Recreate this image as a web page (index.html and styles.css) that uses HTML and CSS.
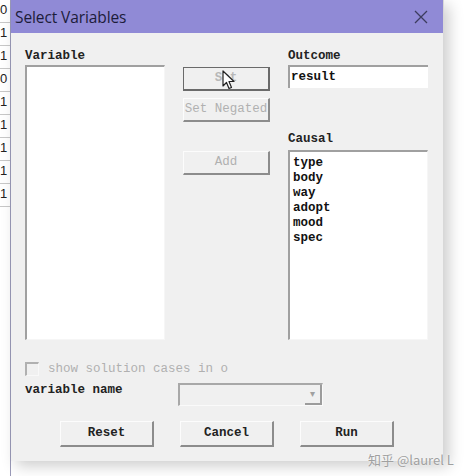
FILE: index.html
```html
<!DOCTYPE html>
<html>
<head>
  <meta charset="utf-8">
  <title>Select Variables</title>
  <link rel="stylesheet" href="styles.css">
</head>
<body>
  <div class="screen">
    <div class="sheet">
      <div class="cell">0</div>
      <div class="cell">1</div>
      <div class="cell">1</div>
      <div class="cell">0</div>
      <div class="cell">1</div>
      <div class="cell">1</div>
      <div class="cell">1</div>
      <div class="cell">1</div>
      <div class="cell">1</div>
    </div>

    <div class="dialog">
      <div class="titlebar">
        <span class="title">Select Variables</span>
        <svg class="close" width="14" height="14" viewBox="0 0 14 14">
          <path d="M1 1 L13 13 M13 1 L1 13" stroke="#3c3c5e" stroke-width="1.3" fill="none"/>
        </svg>
      </div>

      <div class="content">
        <div class="columns">
          <div class="col col-vars">
            <div class="label">Variable</div>
            <div class="listbox tall"></div>
          </div>

          <div class="col col-actions">
            <div class="btn default">Set</div>
            <div class="btn disabled">Set Negated</div>
            <div class="btn disabled add">Add</div>
          </div>

          <div class="col col-model">
            <div class="label">Outcome</div>
            <div class="textbox">result</div>
            <div class="label causal">Causal</div>
            <ul class="listbox causal-list">
              <li>type</li>
              <li>body</li>
              <li>way</li>
              <li>adopt</li>
              <li>mood</li>
              <li>spec</li>
            </ul>
          </div>
        </div>

        <div class="check-row">
          <span class="checkbox"></span>
          <span class="muted">show solution cases in o</span>
        </div>

        <div class="name-row">
          <span class="label bold">variable name</span>
          <div class="combo">
            <span class="combo-arrow">&#9662;</span>
          </div>
        </div>

        <div class="button-row">
          <div class="btn wide">Reset</div>
          <div class="btn wide">Cancel</div>
          <div class="btn wide">Run</div>
        </div>
      </div>

      <svg class="cursor" width="14" height="21" viewBox="0 0 14 21">
        <path d="M1 1 L1 16 L4.5 12.5 L7 18.5 L9.5 17.5 L7 11.5 L12 11.5 Z" fill="#fff" stroke="#222" stroke-width="1.2" stroke-linejoin="round"/>
      </svg>
    </div>

    <div class="watermark">知乎 @laurel L</div>
  </div>
</body>
</html>
```

FILE: styles.css
```css
body {
  margin: 0;
  background: #fff;
  font-family: "Liberation Mono", "DejaVu Sans Mono", monospace;
  font-size: 12.5px;
  color: #111;
}

.screen {
  position: relative;
  display: flex;
  height: 476px;
  overflow: hidden;
}

/* spreadsheet peeking out on the left */
.sheet {
  width: 10px;
  border-right: 1px solid #9a9ab8;
  overflow: hidden;
}

.sheet .cell {
  height: 22px;
  border-bottom: 1px solid #c8c8c8;
  font-family: "Liberation Sans", Arial, sans-serif;
  font-size: 13px;
  line-height: 19px;
  color: #222;
}

.dialog {
  position: relative;
  width: 432px;
  height: 461px;
  background: #f0f0f0;
  box-shadow: 5px 5px 14px rgba(0, 0, 0, 0.2);
  border-right: 1px solid #d8d8d8;
}

.titlebar {
  height: 33px;
  background: #908ad6;
  display: flex;
  align-items: center;
  justify-content: space-between;
  padding: 0 15px 0 4px;
}

.title {
  font-family: "Open Sans", "Noto Sans", sans-serif;
  font-size: 15.5px;
  color: #1c1c3a;
  letter-spacing: -0.1px;
}

.content {
  padding: 14px 14px 0 14px;
}

.columns {
  display: flex;
  gap: 18px;
}

.col {
  display: flex;
  flex-direction: column;
}

.col-vars,
.col-model {
  width: 140px;
}

.col-actions {
  width: 87px;
  padding-top: 20px;
}

.label {
  height: 18px;
  line-height: 18px;
  font-weight: bold;
  color: #222;
}

.label.causal {
  margin-top: 40px;
  height: 22px;
  line-height: 22px;
}

.listbox {
  margin: 0;
  padding: 0;
  list-style: none;
  background: #fff;
  border-top: 2px solid #a0a0a0;
  border-left: 2px solid #a0a0a0;
  border-right: 1px solid #f6f6f6;
  border-bottom: 1px solid #f6f6f6;
  box-sizing: border-box;
}

.listbox.tall {
  height: 275px;
}

.causal-list {
  height: 190px;
  padding: 4px 0 0 3px;
}

.causal-list li {
  height: 15px;
  line-height: 15px;
  font-weight: bold;
}

.textbox {
  height: 23px;
  box-sizing: border-box;
  background: #fff;
  border-top: 2px solid #a0a0a0;
  border-left: 2px solid #a0a0a0;
  padding-left: 1px;
  line-height: 20px;
  font-weight: bold;
}

.btn {
  height: 24px;
  box-sizing: border-box;
  background: #f0f0f0;
  border-top: 1px solid #fcfcfc;
  border-left: 1px solid #fcfcfc;
  border-right: 2px solid #8c8c8c;
  border-bottom: 2px solid #8c8c8c;
  text-align: center;
  line-height: 21px;
  font-weight: bold;
  color: #222;
  margin-bottom: 7px;
}

.btn.default {
  border: 1px solid #6a6a6a;
  border-right-width: 2px;
  border-bottom-width: 2px;
  color: #b8b8b8;
}

.btn.disabled {
  color: #b0b0b0;
  font-weight: normal;
}

.btn.add {
  margin-top: 22px;
}

.check-row {
  display: flex;
  align-items: center;
  gap: 9px;
  margin-top: 21px;
  height: 15px;
}

.checkbox {
  width: 11px;
  height: 11px;
  border-top: 2px solid #b0b0b0;
  border-left: 2px solid #b0b0b0;
  border-right: 1px solid #f8f8f8;
  border-bottom: 1px solid #f8f8f8;
}

.muted {
  color: #b0b0b0;
}

.name-row {
  display: flex;
  align-items: flex-start;
  margin-top: 7px;
  height: 24px;
}

.name-row .label {
  width: 153px;
  line-height: 14px;
}

.combo {
  width: 145px;
  height: 23px;
  box-sizing: border-box;
  border-top: 2px solid #a8a8a8;
  border-left: 2px solid #a8a8a8;
  border-right: 1px solid #fafafa;
  border-bottom: 1px solid #fafafa;
  display: flex;
  justify-content: flex-end;
}

.combo-arrow {
  width: 15px;
  height: 18px;
  border-right: 2px solid #9c9c9c;
  border-bottom: 2px solid #9c9c9c;
  font-family: "DejaVu Sans", sans-serif;
  font-size: 10px;
  color: #a0a0a0;
  text-align: center;
  line-height: 18px;
}

.button-row {
  display: flex;
  gap: 26px;
  margin-top: 14px;
  padding-left: 35px;
}

.btn.wide {
  width: 94px;
  height: 26px;
  line-height: 23px;
  margin: 0;
}

.cursor {
  position: absolute;
  left: 211px;
  top: 70px;
}

.watermark {
  position: absolute;
  left: 368px;
  top: 450px;
  font-family: "Noto Sans CJK SC", "Noto Sans", sans-serif;
  font-size: 13px;
  color: #a0a0a0;
  text-shadow: 0 0 2px #fff;
}
```
